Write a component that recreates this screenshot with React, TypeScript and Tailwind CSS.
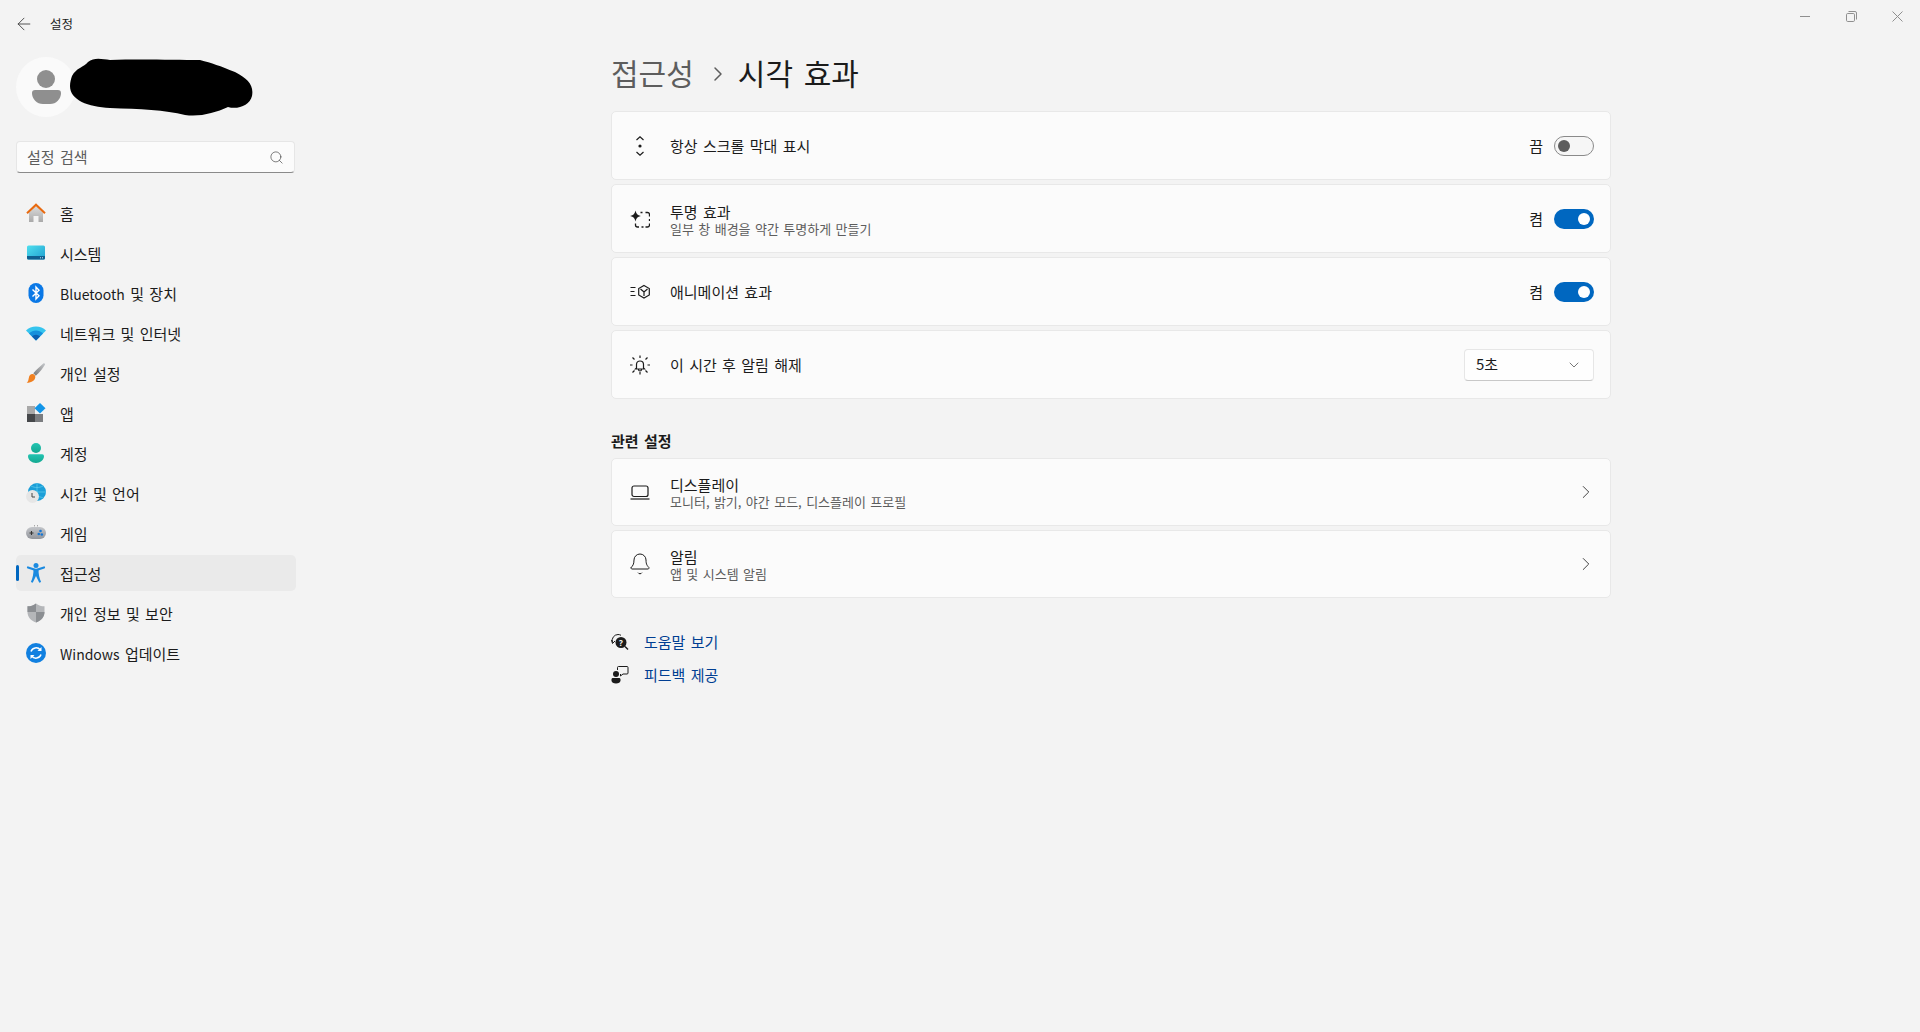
import { ArrowLeft, Bell, ChevronDown, ChevronRight, Search } from "lucide-react";
import type { ReactNode } from "react";

const FONT = "font-['Noto_Sans_CJK_KR','Noto_Sans',sans-serif]";

const HomeIcon = () => (
  <svg width="20" height="20" viewBox="0 0 20 20">
    <defs>
      <linearGradient id="homeBody" x1="0" y1="0" x2="0" y2="1">
        <stop offset="0" stopColor="#dcdcdc" />
        <stop offset="1" stopColor="#a9a9a9" />
      </linearGradient>
    </defs>
    <path d="M3 9.500 10 3l7 6.500V19h-4.500v-6h-5v6H3z" fill="url(#homeBody)" />
    <path d="M.3 9.400 10 .3l9.700 9.100-1.400 1.500L10 3.200 1.700 10.900z" fill="#e86a10" />
  </svg>
);

const SystemIcon = () => (
  <svg width="20" height="20" viewBox="0 0 20 20">
    <defs>
      <linearGradient id="sysTop" x1="0" y1="0" x2="1" y2="1">
        <stop offset="0" stopColor="#4fdfee" />
        <stop offset="1" stopColor="#1f9fd0" />
      </linearGradient>
    </defs>
    <rect x="1" y="2.500" width="18" height="14" rx="1.500" fill="url(#sysTop)" />
    <path d="M1 13h18v2a1.500 1.500 0 0 1-1.500 1.500h-15A1.500 1.500 0 0 1 1 15z" fill="#0f5f8f" />
    <rect x="14" y="14.300" width="1" height="1" fill="#cde" />
    <rect x="16" y="14.300" width="1" height="1" fill="#cde" />
  </svg>
);

const BluetoothIcon = () => (
  <svg width="20" height="20" viewBox="0 0 20 20">
    <rect x="2.500" y="0" width="15" height="20" rx="7.500" fill="#0a78e6" />
    <path d="M6.500 6.500 13 12.800 10 16V4l3 3.200-6.500 6.300" fill="none" stroke="#fff" strokeWidth="1.400" />
  </svg>
);

const WifiIcon = () => (
  <svg width="20" height="20" viewBox="0 0 20 20">
    <path d="M0 7.500C2.600 5 6 3.500 10 3.500S17.400 5 20 7.500L10 17.500z" fill="#35c4ee" />
    <path d="M3 10.500C5 8.700 7.400 7.500 10 7.500s5 1.200 7 3l-7 7z" fill="#1590dc" />
    <path d="M6 13.500C7.100 12.500 8.500 11.800 10 11.800s2.900.7 4 1.700l-4 4z" fill="#0c5fb0" />
  </svg>
);

const BrushIcon = () => (
  <svg width="20" height="20" viewBox="0 0 20 20">
    <defs>
      <linearGradient id="brushHandle" x1="0" y1="1" x2="1" y2="0">
        <stop offset="0" stopColor="#777" />
        <stop offset="1" stopColor="#c5c8cc" />
      </linearGradient>
    </defs>
    <path d="M18.600.4c.6.5.6 1 .2 1.700-2 3.300-4.800 7-9 10.700L7.300 10.300C11 6.300 14.600 3 17.300.6c.5-.4.900-.500 1.300-.2z" fill="url(#brushHandle)" />
    <path d="M6.600 11c1.600.2 2.700 1.300 2.700 2.900 0 3-3.400 5.700-8.600 5.800 1.700-1.300 1.600-2.800 2.100-4.800.4-2.300 1.800-4 3.800-3.900z" fill="#f08020" />
  </svg>
);

const AppsIcon = () => (
  <svg width="20" height="20" viewBox="0 0 20 20">
    <rect x="1" y="3" width="8" height="8" fill="#a8a8a8" />
    <rect x="1" y="11" width="8" height="8" fill="#45474a" />
    <rect x="9" y="11" width="8" height="8" fill="#7b7d80" />
    <path d="m14 0 5.500 5.300-5.500 5.300-5.500-5.300z" fill="#1295e8" />
  </svg>
);

const AccountIcon = () => (
  <svg width="20" height="20" viewBox="0 0 20 20">
    <defs>
      <linearGradient id="acc" x1="0" y1="0" x2="0" y2="1">
        <stop offset="0" stopColor="#22c4b2" />
        <stop offset="1" stopColor="#14a890" />
      </linearGradient>
    </defs>
    <circle cx="10" cy="5" r="5" fill="url(#acc)" />
    <path d="M2 13a1.800 1.800 0 0 1 1.800-1.800h12.400A1.800 1.800 0 0 1 18 13c0 4-3.800 7-8 7s-8-3-8-7z" fill="url(#acc)" />
  </svg>
);

const TimeIcon = () => (
  <svg width="20" height="20" viewBox="0 0 20 20">
    <circle cx="11" cy="9" r="9" fill="#1c9fd8" />
    <path d="M11 0v18M2 9h18M5 3c4 2 8 2 12 0M5 15c4-2 8-2 12 0" stroke="#63cfee" strokeWidth=".7" fill="none" />
    <circle cx="6.500" cy="13.500" r="6.500" fill="#e6e6e6" />
    <path d="M6 10v4h3" stroke="#444" strokeWidth="1" fill="none" />
  </svg>
);

const GameIcon = () => (
  <svg width="20" height="20" viewBox="0 0 20 20">
    <defs>
      <linearGradient id="pad" x1="0" y1="0" x2="0" y2="1">
        <stop offset="0" stopColor="#c4c6ca" />
        <stop offset="1" stopColor="#92959b" />
      </linearGradient>
    </defs>
    <rect x="0" y="4" width="20" height="12" rx="6" fill="url(#pad)" />
    <path d="M3.500 10h4M5.500 8v4" stroke="#333" strokeWidth="1.100" />
    <circle cx="14.500" cy="8" r="1.300" fill="#1676d2" />
    <circle cx="12.800" cy="11" r="1.300" fill="#1676d2" />
    <circle cx="15.800" cy="11.500" r="1.300" fill="#1676d2" />
    <rect x="8" y="2.300" width="1" height="1" fill="#888" />
    <rect x="11" y="2.300" width="1" height="1" fill="#888" />
  </svg>
);

const AccessIcon = () => (
  <svg width="20" height="20" viewBox="0 0 20 20">
    <circle cx="10" cy="2.500" r="2.500" fill="#1b8ae0" />
    <path d="M2 4.500 10 7l8-2.500" stroke="#1b8ae0" strokeWidth="2.200" strokeLinecap="round" fill="none" />
    <path d="M7.500 6.500h5c0 4.500.8 8.500 2.600 12.500l-1.800.8L10 13l-3.300 6.800-1.800-.8C6.700 15 7.500 11 7.500 6.500z" fill="#1b8ae0" />
  </svg>
);

const ShieldIcon = () => (
  <svg width="20" height="20" viewBox="0 0 20 20">
    <path d="M10 .5c2.500 2 5.500 2.800 8.500 2.800V9c0 5-3.400 8.700-8.500 10.500C4.900 17.700 1.500 14 1.500 9V3.300C4.500 3.300 7.500 2.500 10 .5z" fill="#b4b6b9" />
    <path d="M10 .5c-2.500 2-5.500 2.800-8.500 2.800V9H10zM10 9v10.500c5.100-1.800 8.500-5.500 8.500-10.500z" fill="#8b8e92" />
  </svg>
);

const UpdateIcon = () => (
  <svg width="20" height="20" viewBox="0 0 20 20">
    <circle cx="10" cy="10" r="10" fill="#1180e0" />
    <path d="M5 8.500A5.300 5.300 0 0 1 14.300 7M15 11.500A5.300 5.300 0 0 1 5.700 13" fill="none" stroke="#fff" strokeWidth="1.500" />
    <path d="M15.500 4v4h-4zM4.500 16v-4h4z" fill="#fff" />
  </svg>
);

const ScrollIcon = () => (
  <svg width="20" height="20" viewBox="0 0 20 20" fill="none" stroke="#1b1b1b" strokeWidth="1.200">
    <path d="m6.500 4 3.500-3.200L13.500 4M6.500 16l3.500 3.200 3.500-3.200" />
    <circle cx="10" cy="10" r="1.600" fill="#1b1b1b" stroke="none" />
  </svg>
);

const TransparencyIcon = () => (
  <svg width="20" height="20" viewBox="0 0 20 20" fill="none">
    <path
      d="M10.500 3.500h2M15.500 3.500h2a2 2 0 0 1 2 2v2M19.500 10v2M19.500 14.500V16a2 2 0 0 1-2 2h-2M11.500 18h2M9 18H7.500a2 2 0 0 1-2-2v-1.500"
      stroke="#1b1b1b"
      strokeWidth="1.300"
    />
    <path d="M5.500 1.500c.6 3.200 2 4.700 5.300 5.500-3.300.8-4.700 2.300-5.300 5.500C4.900 9.300 3.500 7.800.2 7c3.300-.8 4.700-2.300 5.300-5.500z" fill="#1b1b1b" />
  </svg>
);

const AnimationIcon = () => (
  <svg width="20" height="20" viewBox="0 0 20 20" fill="none" stroke="#1b1b1b" strokeWidth="1.200">
    <path d="M.5 5.500h5M.5 9.500h4M.5 13.500h5" />
    <path d="m14 3.500 5.300 3v6.500L14 16l-5.300-3V6.500zM10.500 7l3.500 3 3.500-3M14 10v4" />
  </svg>
);

const NotifyTimeIcon = () => (
  <svg width="20" height="20" viewBox="0 0 20 20" fill="none" stroke="#1b1b1b" strokeWidth="1.200">
    <path d="M6.500 13V9.500a3.500 3.500 0 0 1 7 0V13l1 1h-9zM8.500 14.500a1.500 1.500 0 0 0 3 0M10 .5V3M10 17v2.500M0 10h2.500M17.500 10H20M2.500 2.500l2 2M17.500 2.500l-2 2M2.500 17.500l2-2M17.500 17.500l-2-2" />
  </svg>
);

const LaptopIcon = () => (
  <svg width="20" height="20" viewBox="0 0 20 20" fill="none" stroke="#1b1b1b" strokeWidth="1.200">
    <rect x="2" y="4" width="16" height="10.500" rx="2" />
    <path d="M.5 17h19" />
  </svg>
);

const HelpIcon = () => (
  <svg width="18" height="18" viewBox="0 0 18 18">
    <path d="M1.500 9.500A6 6 0 0 1 7 1.500a6 6 0 0 1 3 .8" fill="none" stroke="#1b1b1b" strokeWidth="1" />
    <path d="M.5 7 1.500 10.500 4 8" fill="none" stroke="#1b1b1b" strokeWidth="1" />
    <circle cx="10" cy="9.500" r="5.500" fill="#1b1b1b" />
    <path d="m14 13.500 3 3" stroke="#1b1b1b" strokeWidth="1.400" />
    <text x="10" y="12.500" fontSize="8" fontWeight="700" textAnchor="middle" fill="#fff" fontFamily="Noto Sans">?</text>
  </svg>
);

const FeedbackIcon = () => (
  <svg width="18" height="18" viewBox="0 0 18 18">
    <circle cx="5" cy="8" r="3" fill="#1b1b1b" />
    <path d="M.5 13.500c0-1 .6-1.500 1.500-1.500h6c.9 0 1.500.5 1.500 1.500v1c0 2-2 3-4.500 3s-4.500-1-4.500-3z" fill="#1b1b1b" />
    <path d="M6.500 4V1.500a1 1 0 0 1 1-1h8.500a1 1 0 0 1 1 1v5.500a1 1 0 0 1-1 1h-4l-2.500 2V8" fill="none" stroke="#1b1b1b" strokeWidth="1" />
  </svg>
);

const navItems: { label: ReactNode; key: string; icon: ReactNode; active?: boolean }[] = [
  { key: "home", label: "홈", icon: <HomeIcon /> },
  { key: "system", label: "시스템", icon: <SystemIcon /> },
  {
    key: "bluetooth",
    label: (
      <>
        <span className="text-[14px]">Bluetooth</span> 및 장치
      </>
    ),
    icon: <BluetoothIcon />,
  },
  { key: "network", label: "네트워크 및 인터넷", icon: <WifiIcon /> },
  { key: "personal", label: "개인 설정", icon: <BrushIcon /> },
  { key: "apps", label: "앱", icon: <AppsIcon /> },
  { key: "account", label: "계정", icon: <AccountIcon /> },
  { key: "time", label: "시간 및 언어", icon: <TimeIcon /> },
  { key: "game", label: "게임", icon: <GameIcon /> },
  { key: "access", label: "접근성", icon: <AccessIcon />, active: true },
  { key: "privacy", label: "개인 정보 및 보안", icon: <ShieldIcon /> },
  {
    key: "update",
    label: (
      <>
        <span className="text-[14px]">Windows</span> 업데이트
      </>
    ),
    icon: <UpdateIcon />,
  },
];

const Toggle = ({ on }: { on: boolean }) =>
  on ? (
    <div className="flex h-5 w-10 items-center justify-end rounded-full bg-[#0067c0] pr-1">
      <div className="size-3 rounded-full bg-white" />
    </div>
  ) : (
    <div className="flex h-5 w-10 items-center rounded-full border border-[#8a8a8a] bg-[#f6f6f6] pl-[3px]">
      <div className="size-3 rounded-full bg-[#5d5d5d]" />
    </div>
  );

const Card = ({
  icon,
  title,
  sub,
  right,
  short,
}: {
  icon: ReactNode;
  title: string;
  sub?: string;
  right: ReactNode;
  short?: boolean;
}) => (
  <div
    className={`flex items-center rounded-[5px] border border-[#e8e8e8] bg-[#fbfbfb] pl-[18px] pr-4 ${
      short ? "h-[68px]" : "h-[69px]"
    }`}
  >
    <div className="flex w-5 shrink-0 items-center justify-center">{icon}</div>
    <div className="ml-[20px] flex flex-1 flex-col justify-center pt-[1px]">
      <div className="text-[15px] leading-[18px] text-[#1b1b1b] [word-spacing:2px]">{title}</div>
      {sub && <div className="text-[13px] leading-[15px] text-[#5d5d5d] [word-spacing:1.500px]">{sub}</div>}
    </div>
    {right}
  </div>
);

const ToggleRow = ({ label, on }: { label: string; on: boolean }) => (
  <div className="flex items-center gap-[11px]">
    <span className="pt-[1px] text-[15px] text-[#1b1b1b]">{label}</span>
    <Toggle on={on} />
  </div>
);

const Chevron = () => (
  <ChevronRight size={22} strokeWidth={1} className="mr-[-3px] text-[#333]" />
);

export default function App() {
  return (
    <div className={`${FONT} flex h-[1032px] w-[1920px] overflow-hidden bg-[#f3f3f3]`}>
      {/* Sidebar */}
      <aside className="flex w-[312px] shrink-0 flex-col pl-4">
        <div className="flex h-12 items-center">
          <ArrowLeft size={20} strokeWidth={1} className="-ml-[2px] text-[#333]" />
          <span className="ml-4 text-[12.500px] text-[#1b1b1b]">설정</span>
        </div>
        <div className="mt-[9px] flex h-[60px] items-center">
          <div className="flex size-[60px] flex-col items-center justify-center gap-[2px] rounded-full bg-[#fafafa]">
            <div className="size-[18px] rounded-full bg-[#8f8f8f]" />
            <div className="h-[14px] w-[29px] rounded-b-[14px] rounded-t-[4px] bg-[#8f8f8f]" />
          </div>
          <svg width="184" height="60" viewBox="0 0 184 60" className="-ml-[6px] translate-y-px">
            <path
              d="M2 18C6 10 14 9 18 4C24 -1 32 1 40 2C70 1 105 2 130 2C142 5 150 8 165 14C178 21 184 27 182 38C180 47 168 52 158 49C145 55 130 59 115 57C95 52 70 51 40 50C18 49 0 42 0 28C0 24 1 21 2 18Z"
              fill="#000"
            />
          </svg>
        </div>
        <div className="mt-6 flex h-8 w-[279px] items-center justify-between rounded-[4px] border border-[#e6e6e6] border-b-[#8a8a8a] bg-[#fbfbfb] pl-[10px] pr-[10px]">
          <span className="text-[15px] text-[#5d5d5d] [word-spacing:2px]">설정 검색</span>
          <Search size={15} strokeWidth={1} className="text-[#333]" />
        </div>
        <nav className="mt-[22px] flex w-[280px] flex-col gap-1">
          {navItems.map((item) => (
            <div
              key={item.key}
              className={`relative flex h-9 items-center rounded-[5px] pl-[10px] ${
                item.active ? "bg-[#eaeaea]" : ""
              }`}
            >
              {item.active && (
                <div className="absolute left-0 top-[10px] h-4 w-[3px] rounded-full bg-[#0067c0]" />
              )}
              <div className="flex w-5 justify-center">{item.icon}</div>
              <span className="ml-[14px] pt-[2px] text-[15px] text-[#1b1b1b] [word-spacing:2px]">{item.label}</span>
            </div>
          ))}
        </nav>
      </aside>

      {/* Main */}
      <main className="flex flex-1 flex-col">
        <div className="flex h-[32px] items-center justify-end">
          <div className="flex w-[46px] justify-center">
            <div className="h-px w-[10px] bg-[#8f8f8f]" />
          </div>
          <div className="flex w-[46px] justify-center">
            <svg width="11" height="11" viewBox="0 0 11 11" fill="none" stroke="#8f8f8f">
              <rect x=".5" y="2.500" width="8" height="8" rx="1.200" />
              <path d="M2.500.5h6.500a1.500 1.500 0 0 1 1.500 1.500v6.500" />
            </svg>
          </div>
          <div className="flex w-[46px] justify-center">
            <svg width="11" height="11" viewBox="0 0 11 11" stroke="#8f8f8f">
              <path d="m.5.5 10 10M10.500.5l-10 10" />
            </svg>
          </div>
        </div>
        <div className="ml-[299px] w-[1000px]">
          <h1 className="flex h-[79px] items-start pt-[11px] text-[30px] leading-[58px] font-normal [word-spacing:4px]">
            <span className="text-[#5d5d5d]">접근성</span>
            <ChevronRight size={24} strokeWidth={1.500} className="ml-[12px] mr-[8px] mt-[19px] text-[#5d5d5d]" />
            <span className="text-[#1b1b1b]">시각 효과</span>
          </h1>
          <div className="flex flex-col gap-1">
            <Card icon={<ScrollIcon />} title="항상 스크롤 막대 표시" right={<ToggleRow label="끔" on={false} />} />
            <Card
              icon={<TransparencyIcon />}
              title="투명 효과"
              sub="일부 창 배경을 약간 투명하게 만들기"
              right={<ToggleRow label="켬" on />}
            />
            <Card icon={<AnimationIcon />} title="애니메이션 효과" right={<ToggleRow label="켬" on />} />
            <Card
              icon={<NotifyTimeIcon />}
              title="이 시간 후 알림 해제"
              right={
                <div className="flex h-8 w-[130px] items-center justify-between rounded-[4px] border border-[#e6e6e6] border-b-[#c8c8c8] bg-[#fefefe] pl-[11px] pr-[11px]">
                  <span className="text-[15px] text-[#1b1b1b]">5초</span>
                  <ChevronDown size={16} strokeWidth={1} className="text-[#333]" />
                </div>
              }
            />
          </div>
          <h2 className="mt-[31px] h-[28px] text-[15px] leading-[22px] font-semibold text-[#1b1b1b] [word-spacing:2px]">
            관련 설정
          </h2>
          <div className="flex flex-col gap-1">
            <Card
              icon={<LaptopIcon />}
              title="디스플레이"
              sub="모니터, 밝기, 야간 모드, 디스플레이 프로필"
              right={<Chevron />}
              short
            />
            <Card
              icon={<Bell size={24} strokeWidth={1} className="shrink-0 text-[#1b1b1b]" />}
              title="알림"
              sub="앱 및 시스템 알림"
              right={<Chevron />}
              short
            />
          </div>
          <div className="mt-[32px] flex flex-col gap-[9px]">
            <div className="flex h-6 items-center">
              <HelpIcon />
              <a className="ml-[15px] text-[15px] text-[#003e92] [word-spacing:2px]">도움말 보기</a>
            </div>
            <div className="flex h-6 items-center">
              <FeedbackIcon />
              <a className="ml-[15px] text-[15px] text-[#003e92] [word-spacing:2px]">피드백 제공</a>
            </div>
          </div>
        </div>
      </main>
    </div>
  );
}
